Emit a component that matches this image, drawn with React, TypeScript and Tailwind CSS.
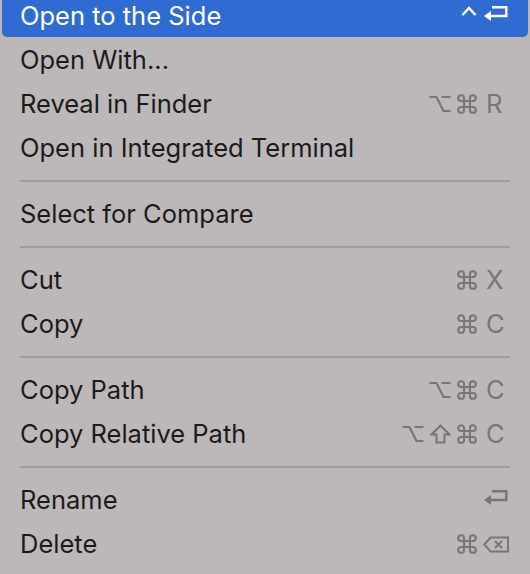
import React from 'react';

type Key = { kind: 'text'; value: string } | { kind: 'icon'; name: string };

const Glyph: React.FC<{ name: string }> = ({ name }) => {
  switch (name) {
    case 'cmd':
      return (
        <svg width="20" height="20" viewBox="1.8 1.8 20.4 20.4" fill="none" stroke="currentColor" strokeWidth="2.1">
          <path d="M15 6v12a3 3 0 1 0 3-3H6a3 3 0 1 0 3 3V6a3 3 0 1 0-3 3h12a3 3 0 1 0-3-3" />
        </svg>
      );
    case 'opt':
      return (
        <svg width="22" height="18" viewBox="0 0 22 18" fill="none" stroke="currentColor" strokeWidth="2.2">
          <path d="M0.5 2H7.5L14.5 16H21.5M12.5 2H21.5" />
        </svg>
      );
    case 'shift':
      return (
        <svg width="21" height="20" viewBox="0 0 21 20" fill="none" stroke="currentColor" strokeWidth="2">
          <path d="M10.5 1.5L19.5 10.5H14.5V18.5H6.5V10.5H1.5Z" />
        </svg>
      );
    case 'ctrl':
      // drawn high in its box, like the raised caret glyph
      return (
        <svg width="16" height="21" viewBox="0 0 16 21" fill="none" stroke="currentColor" strokeWidth="2.5">
          <path d="M1.5 9L8 2L14.5 9" />
        </svg>
      );
    case 'return':
      return (
        <svg width="24" height="27" viewBox="0 0 24 27" fill="none">
          <path d="M8 4.3H22.3V13H5" stroke="currentColor" strokeWidth="2.4" />
          <path d="M0 13L7 8V18Z" fill="currentColor" />
        </svg>
      );
    case 'delete':
      return (
        <svg width="26" height="17" viewBox="0 0 26 17" fill="none" stroke="currentColor" strokeWidth="2">
          <path d="M1.3 8.5L7.5 1.5H25V15.5H7.5Z" />
          <path d="M12 5L19 12M19 5L12 12" />
        </svg>
      );
    default:
      return null;
  }
};

type Item = { label: string; mods?: string[]; key?: Key; active?: boolean };

const sections: Item[][] = [
  [
    { label: 'Open to the Side', active: true, mods: ['ctrl'], key: { kind: 'icon', name: 'return' } },
    { label: 'Open With...' },
    { label: 'Reveal in Finder', mods: ['opt', 'cmd'], key: { kind: 'text', value: 'R' } },
    { label: 'Open in Integrated Terminal' },
  ],
  [{ label: 'Select for Compare' }],
  [
    { label: 'Cut', mods: ['cmd'], key: { kind: 'text', value: 'X' } },
    { label: 'Copy', mods: ['cmd'], key: { kind: 'text', value: 'C' } },
  ],
  [
    { label: 'Copy Path', mods: ['opt', 'cmd'], key: { kind: 'text', value: 'C' } },
    { label: 'Copy Relative Path', mods: ['opt', 'shift', 'cmd'], key: { kind: 'text', value: 'C' } },
  ],
  [
    { label: 'Rename', key: { kind: 'icon', name: 'return' } },
    { label: 'Delete', mods: ['cmd'], key: { kind: 'icon', name: 'delete' } },
  ],
];

const MenuRow: React.FC<{ item: Item }> = ({ item }) => (
  <div className="h-[44px] px-[2px] py-[1px]">
    <div
      className={
        item.active
          ? 'flex h-full items-center justify-between rounded-[5px] bg-[#2f6bd0] pl-[18px] pr-[19px] text-white'
          : 'flex h-full items-center justify-between pl-[18px] pr-[19px] text-[#1c1a1b]'
      }
    >
      <span className="text-[25.5px] leading-none">{item.label}</span>
      {item.key && (
        <div className={item.active ? 'flex items-center text-white' : 'flex items-center text-[#797578]'}>
          <div className="flex items-center gap-[6px]">
            {item.mods?.map((m) => (
              <Glyph key={m} name={m} />
            ))}
          </div>
          <div className="ml-[6px] flex w-[26px] items-center justify-center">
            {item.key.kind === 'text' ? (
              <span className="w-full pl-[3px] text-left text-[25.5px] leading-none">{item.key.value}</span>
            ) : (
              <Glyph name={item.key.name} />
            )}
          </div>
        </div>
      )}
    </div>
  </div>
);

export default function App() {
  return (
    <div className="h-[574px] w-[530px] overflow-hidden bg-[#bcb7b9] font-['Inter','Noto_Sans',sans-serif]">
      <div className="mt-[-6px]">
        {sections.map((section, si) => (
          <div key={si}>
            {si > 0 && (
              <div className="h-[22px] px-[20px] py-[10px]">
                <div className="h-[2px] bg-[#a29d9f]" />
              </div>
            )}
            {section.map((item) => (
              <MenuRow key={item.label} item={item} />
            ))}
          </div>
        ))}
      </div>
    </div>
  );
}
